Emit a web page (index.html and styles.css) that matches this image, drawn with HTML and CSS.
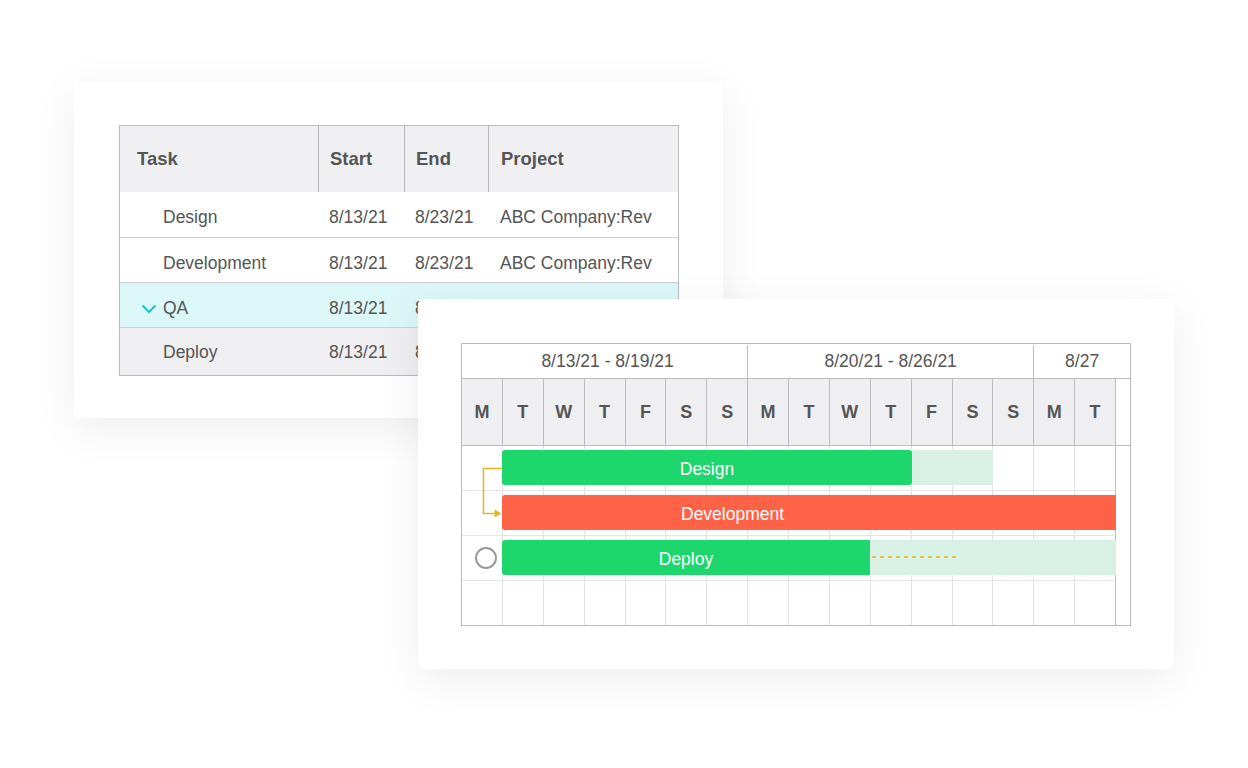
FILE: index.html
```html
<!DOCTYPE html>
<html lang="en">
<head>
<meta charset="utf-8">
<title>Gantt</title>
<link rel="stylesheet" href="styles.css">
</head>
<body>
<div class="stage">
  <section class="card card-table">
    <div class="table">
      <div class="row head">
        <div class="cell c1">Task</div>
        <div class="cell c2">Start</div>
        <div class="cell c3">End</div>
        <div class="cell c4">Project</div>
      </div>
      <div class="row r-a">
        <div class="cell c1 name">Design</div>
        <div class="cell c2">8/13/21</div>
        <div class="cell c3">8/23/21</div>
        <div class="cell c4">ABC Company:Rev</div>
      </div>
      <div class="row r-b">
        <div class="cell c1 name">Development</div>
        <div class="cell c2">8/13/21</div>
        <div class="cell c3">8/23/21</div>
        <div class="cell c4">ABC Company:Rev</div>
      </div>
      <div class="row r-c qa">
        <div class="cell c1 name"><svg class="chev" width="16" height="10" viewBox="0 0 16 10"><path d="M1.5 1.5 L8 8 L14.5 1.5" fill="none" stroke="#1cc3cb" stroke-width="2"/></svg>QA</div>
        <div class="cell c2">8/13/21</div>
        <div class="cell c3">8/23/21</div>
        <div class="cell c4"></div>
      </div>
      <div class="row r-d deploy">
        <div class="cell c1 name">Deploy</div>
        <div class="cell c2">8/13/21</div>
        <div class="cell c3">8/23/21</div>
        <div class="cell c4"></div>
      </div>
    </div>
  </section>

  <section class="card card-gantt">
    <div class="gantt">
      <div class="weeks">
        <div class="week wk1">8/13/21 - 8/19/21</div>
        <div class="week wk2">8/20/21 - 8/26/21</div>
        <div class="week wk3">8/27</div>
      </div>
      <div class="days">
        <div class="day">M</div><div class="day">T</div><div class="day">W</div><div class="day">T</div><div class="day">F</div><div class="day">S</div><div class="day">S</div>
        <div class="day">M</div><div class="day">T</div><div class="day">W</div><div class="day">T</div><div class="day">F</div><div class="day">S</div><div class="day">S</div>
        <div class="day">M</div><div class="day">T</div>
        <div class="gutter-h"></div>
      </div>
      <div class="body">
        <div class="cells">
          <div class="gc"></div><div class="gc"></div><div class="gc"></div><div class="gc"></div><div class="gc"></div><div class="gc"></div><div class="gc"></div><div class="gc"></div><div class="gc"></div><div class="gc"></div><div class="gc"></div><div class="gc"></div><div class="gc"></div><div class="gc"></div><div class="gc"></div><div class="gc last"></div>
          <div class="gutter-b"></div>
          <div class="gc"></div><div class="gc"></div><div class="gc"></div><div class="gc"></div><div class="gc"></div><div class="gc"></div><div class="gc"></div><div class="gc"></div><div class="gc"></div><div class="gc"></div><div class="gc"></div><div class="gc"></div><div class="gc"></div><div class="gc"></div><div class="gc"></div><div class="gc last"></div>
          <div class="gc"></div><div class="gc"></div><div class="gc"></div><div class="gc"></div><div class="gc"></div><div class="gc"></div><div class="gc"></div><div class="gc"></div><div class="gc"></div><div class="gc"></div><div class="gc"></div><div class="gc"></div><div class="gc"></div><div class="gc"></div><div class="gc"></div><div class="gc last"></div>
          <div class="gc bottom"></div><div class="gc bottom"></div><div class="gc bottom"></div><div class="gc bottom"></div><div class="gc bottom"></div><div class="gc bottom"></div><div class="gc bottom"></div><div class="gc bottom"></div><div class="gc bottom"></div><div class="gc bottom"></div><div class="gc bottom"></div><div class="gc bottom"></div><div class="gc bottom"></div><div class="gc bottom"></div><div class="gc bottom"></div><div class="gc bottom last"></div>
        </div>

        <div class="track design-rest"></div>
        <div class="bar design">Design</div>
        <div class="bar dev"><span class="dev-label">Development</span></div>
        <div class="track deploy-rest"></div>
        <div class="bar deploy">Deploy</div>
        <div class="dash"></div>
        <div class="milestone"></div>
        <svg class="link" width="26" height="56" viewBox="0 0 26 56">
          <path d="M22 4.5 H3.5 V49.5 H15" fill="none" stroke="#e6b526" stroke-width="1.5"/>
          <polygon points="14.5,45.5 21.5,49.5 14.5,53.5" fill="#e6b526"/>
        </svg>
      </div>
    </div>
  </section>
</div>
</body>
</html>
```

FILE: styles.css
```css
* { box-sizing: border-box; }
html, body { margin: 0; padding: 0; background: #ffffff; }
body {
  font-family: "Liberation Sans", Arial, sans-serif;
  color: #555555;
  width: 1248px;
  height: 768px;
  overflow: hidden;
}
.stage {
  position: relative;
  width: 1248px;
  height: 768px;
}
.card {
  position: absolute;
  background: #ffffff;
  border-radius: 4px;
  box-shadow: 0 10px 44px rgba(0, 0, 0, 0.075);
}
.card-table {
  left: 74px;
  top: 82px;
  width: 649px;
  height: 336px;
  padding: 43px 0 0 45px;
}
.card-gantt {
  left: 418px;
  top: 299px;
  width: 756px;
  height: 370px;
  padding: 44px 0 0 43px;
  border-radius: 6px;
}

/* ---------- task table ---------- */
.table {
  width: 560px;
  border: 1px solid #bcbcbc;
  display: flex;
  flex-direction: column;
}
.row {
  display: grid;
  grid-template-columns: 198px 86px 84px 190px;
  font-size: 17.5px;
  border-bottom: 1px solid #cfcfcf;
}
.row .cell {
  display: flex;
  align-items: center;
  white-space: nowrap;
}
.row .c2, .row .c3 { padding-left: 11px; }
.row .c4 { padding-left: 12px; }
.row.head {
  height: 66px;
  background: #f0f0f2;
  font-weight: bold;
  font-size: 18.5px;
  border-bottom: none;
}
.row.head .c1 { padding-left: 17px; }
.row.head .c2, .row.head .c3, .row.head .c4 { border-left: 1px solid #b5b5b5; }
.row.head .c2, .row.head .c3 { padding-left: 11px; }
.row.head .c4 { padding-left: 12px; }
.row .name { padding-left: 43px; position: relative; }
.r-a, .r-b, .r-c { padding-top: 6px; }
.r-a { height: 46px; }
.r-b { height: 45px; }
.r-c { height: 45px; }
.r-d { height: 47px; border-bottom: none; padding-top: 2px; }
.qa { background: #dcf7f8; }
.deploy { background: #efeff1; }
.chev {
  position: absolute;
  left: 21px;
  top: 50%;
  margin-top: -4px;
}

/* ---------- gantt ---------- */
.gantt {
  width: 670px;
  border: 1px solid #bcbcbc;
  display: flex;
  flex-direction: column;
}
.weeks, .days, .cells {
  display: grid;
  grid-template-columns: repeat(16, 1fr) 14px;
}
.weeks {
  height: 35px;
  border-bottom: 1px solid #bcbcbc;
  font-size: 17.5px;
  padding-top: 1px;
}
.week {
  display: flex;
  align-items: center;
  justify-content: center;
}
.wk1 { grid-column: 1 / 8; border-right: 1px solid #bcbcbc; padding-left: 6px; }
.wk2 { grid-column: 8 / 15; border-right: 1px solid #bcbcbc; }
.wk3 { grid-column: 15 / 18; }
.days {
  height: 67px;
  border-bottom: 1px solid #bcbcbc;
}
.day {
  background: #efeff1;
  border-right: 1px solid #bcbcbc;
  display: flex;
  align-items: center;
  justify-content: center;
  font-weight: bold;
  font-size: 18px;
}
.gutter-h { background: #ffffff; }
.body {
  position: relative;
  height: 179px;
}
.cells {
  grid-template-rows: 45px 45px 45px 44px;
  height: 179px;
}
.gc {
  border-right: 1px solid #e3e3e3;
  border-bottom: 1px solid #e6e6e6;
}
.gc.last { border-right-color: #bcbcbc; }
.gc.bottom { border-bottom: none; }
.gutter-b {
  grid-column: 17;
  grid-row: 1 / 5;
}

.bar, .track {
  position: absolute;
  height: 35px;
  padding-top: 3px;
  line-height: 32px;
  color: #ffffff;
  font-size: 17.5px;
  text-align: center;
  white-space: nowrap;
}
.bar.design {
  left: 40px;
  top: 4px;
  width: 410px;
  background: #1dd66c;
  border-radius: 3px;
}
.track.design-rest {
  left: 446px;
  top: 4px;
  width: 85px;
  background: #d9f0e4;
  border-radius: 3px;
}
.bar.dev {
  left: 40px;
  top: 49px;
  width: 614px;
  background: #ff6347;
  border-radius: 3px 0 0 3px;
  text-align: left;
}
.dev-label { padding-left: 179px; }
.bar.deploy {
  left: 40px;
  top: 94px;
  width: 368px;
  background: #1dd66c;
  border-radius: 3px 0 0 3px;
}
.track.deploy-rest {
  left: 408px;
  top: 94px;
  width: 246px;
  background: #d9f0e4;
}
.dash {
  position: absolute;
  left: 410px;
  top: 110px;
  width: 88px;
  height: 2px;
  background: repeating-linear-gradient(to right, #e9c04a 0 4px, transparent 4px 8px);
}
.milestone {
  position: absolute;
  left: 13px;
  top: 101px;
  width: 22px;
  height: 22px;
  border: 2px solid #9a9a9a;
  border-radius: 50%;
  background: #ffffff;
}
.link {
  position: absolute;
  left: 18px;
  top: 18px;
}
```
